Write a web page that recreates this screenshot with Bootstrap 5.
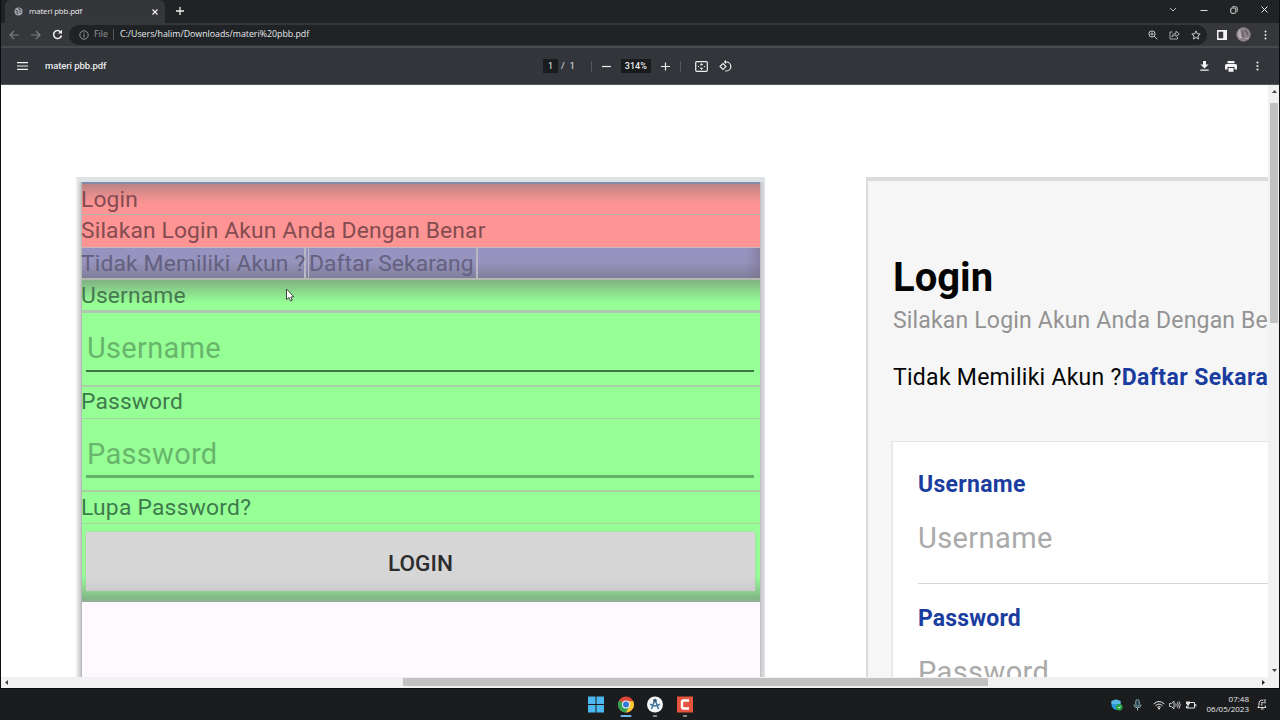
<!DOCTYPE html>
<html lang="id">
<head>
<meta charset="utf-8">
<meta name="viewport" content="width=device-width, initial-scale=1">
<title>materi pbb.pdf</title>
<link rel="stylesheet" href="https://cdn.jsdelivr.net/npm/bootstrap@5.3.0/dist/css/bootstrap.min.css">
<script src="https://cdn.jsdelivr.net/npm/bootstrap@5.3.0/dist/js/bootstrap.bundle.min.js"></script>
<style>
  body { width: 1280px; height: 720px; overflow: hidden; background: #1b1c1e; font-family: "Open Sans", "Liberation Sans", sans-serif; color: #e8eaed; }
  svg { display: block; flex: none; }
  .window { height: 689px; padding: 0 1px; background: #0c0d0e; }
  .tabstrip { height: 23px; background: #202324; }
  .tab-on { width: 160px; height: 23px; margin-left: 4px; padding: 0 7px 0 9px; background: #35363a; border-radius: 6px 6px 0 0; font-size: 8px; }
  .tab-on span { letter-spacing: -.2px; margin-left: 6px; margin-top: -1px; }
  .addressbar { height: 25px; background: #35373a; border-bottom: 2px solid #48494b; padding-left: 8px; }
  .omnibox { width: 1138px; height: 20px; border-radius: 10px; background: #202325; font-size: 8.8px; padding: 0 6px 0 7px; margin-left: 6px; }
  .pdfbar { height: 37px; background: #323539; font-family: Roboto, sans-serif; font-size: 9px; border-bottom: 1px solid #55585a; }
  .pdfbar .side { width: 530px; }
  .numbox { background: #191b1c; height: 14px; line-height: 14px; text-align: center; }
  .sep { width: 1px; height: 11px; background: #55585b; }
  .viewer { height: 592px; background: #fff; font-family: Roboto, sans-serif; }
  .pages { width: 1267px; height: 592px; overflow: hidden; }
  .vscroll { width: 11px; background: #f1f1f1; padding-left: 1px; }
  .vscroll .thumb { width: 8px; height: 220px; background: #c1c1c1; margin: 10px 1px 0; }
  .hscroll { height: 11px; background: #f1f1f1; }
  .hscroll .thumb { width: 585px; height: 8px; background: #c1c1c1; margin-top: -1px; }

  .phone { width: 690px; margin: 92px 0 0 74px; padding: 5px 5px 0 6px; height: 560px;
           background: linear-gradient(90deg, #fff 0, #e4e4e4 3px, #c4c4c4 6px, #bdbdbd 685px, #cbc9cd 686px, #e3e1e4 690px); position: relative; }
  .phone::before { content: ""; position: absolute; left: 2px; right: 0; top: 0; height: 5px; background: #dce2e6; }
  .screen { position: relative; height: 560px; background: #fdf9ff; border-left: 1px solid #b5bbb9; font-size: 22.8px; line-height: 28px; letter-spacing: .16px; color: #3e7a4c; }
  .line-row { height: 32px; border-bottom: 1px solid #b5b5ac; white-space: nowrap; padding-top: 1px; }
  .line-row > span { margin-left: -1px; }
  .r1 { background: linear-gradient(#b98484 0, #d88989 7px, #f69292 17px, #ff9494 22px); color: #834c50; border-top: 2px solid #7f8ba6; height: 33px; padding-top: 2px; }
  .r2 { background: #ff9494; color: #834c50; border-bottom: 0; height: 32px; padding-top: 2px; }
  .r3 { background: linear-gradient(90deg, transparent 664px, #776f8688 679px), linear-gradient(#9693c2 0, #9693bd 14px, #7f7c98 31px); color: #646180; border-top: 1px solid #c2b8bf; border-bottom: 2px solid #b1b8ad; height: 33px; padding-top: 1px; }
  .r3 span { display: inline-block; height: 30px; margin-top: -1px; padding-top: 2px; border-right: 2px solid #b9b7c2; }
  .r3 .first { width: 225px; }
  .r3 .second { width: 170px; margin-left: 2px; border-left: 1px solid #b9b7c2; letter-spacing: .1px; }
  .r4 { background: linear-gradient(#80b183, #8bdb8d 12px, #96ff96 23px); height: 33px; border-bottom: 3px solid #b0c6ae; padding-top: 2px; color: #467850; }
  .g { background: #96ff96; border-color: #a8cfa6; }
  .hint { height: 74px; padding: 18px 6px 0 5px; font-size: 29px; line-height: 34px; letter-spacing: .3px; color: #68b66c; border-bottom: 2px solid #a8cfa6; }
  .hint-last { height: 73px; }
  .hint .rule { height: 2px; background: #3c7643; margin: 5px 0 0 -1px; }
  .hint .rule.soft { height: 3px; background: #63b067; margin-top: 4px; }
  .lupa { padding-top: 2px; letter-spacing: .25px; }
  .btn-wrap { height: 78px; padding: 8px 5px 0 4px; background: linear-gradient(#96ff96 52px, #84b887 74px, #87b68a); border-bottom: 2px solid #93b194; }
  .btn-login { height: 59px; width: 100%; border: 0; border-radius: 0; background: linear-gradient(#d6d6d6 46px, #cbcbce); color: #2c2b2e; font-size: 22.6px; font-weight: 500; padding: 3px 0 0; line-height: 57px; box-shadow: 0 0 3px #a9c8ab; }

  .result { margin: 92px 0 0 101px; width: 402px; height: 560px; background: #f6f6f6; border-left: 2px solid #dadada; border-top: 4px solid #dcdcdc; padding-left: 25px; flex: none; white-space: nowrap; color: #050505; }
  .result h1 { font-size: 40px; line-height: 48px; font-weight: 700; margin: 73px 0 0; }
  .sub { font-size: 23px; line-height: 28px; letter-spacing: .17px; color: #939393; margin-top: 5px; }
  .ask { font-size: 23px; line-height: 28px; letter-spacing: .27px; margin-top: 29px; }
  .ask .blue { letter-spacing: .4px; }
  .blue { color: #1b3da0; font-weight: 700; }
  .form-box { margin: 49px 0 0 -2px; height: 300px; background: #fff; border-left: 2px solid #e8e8e8; border-top: 1px solid #e4e4e4; padding: 29px 0 0 25px; font-size: 23px; line-height: 28px; letter-spacing: .3px; }
  .form-box .blue:not(:first-child) { margin-top: 21px; letter-spacing: .15px; }
  .ph { font-size: 29px; line-height: 34px; letter-spacing: .4px; color: #aaa; margin-top: 22px; }
  .field-line { height: 1px; background: #d6d6d6; margin-top: 28px; }

  .taskbar { height: 31px; padding-left: 587px; background: #1b1c1e; }
  .app { width: 18px; height: 27px; margin-right: 11.7px; }
  .clock { font-size: 8px; line-height: 10px; text-align: right; width: 47px; margin-left: 6px; margin-top: -1px; }
  .cursor { position: absolute; left: 203px; top: 106px; }
</style>
</head>
<body>
<div class="window">
  <!-- tab strip -->
  <div class="tabstrip d-flex align-items-center">
    <div class="tab-on d-flex align-items-center">
      <svg width="9" height="9" viewBox="0 0 9 9"><circle cx="4.500" cy="4.500" r="4" fill="#9fa3a8"/><path d="M1.500 3 3.500 4.200 3 5.500l1 1.500M5 1v1.500l2 .5M5.500 4.500 7 5.500" fill="none" stroke="#3b3d40" stroke-width="1"/></svg>
      <span>materi pbb.pdf</span>
      <svg class="ms-auto" width="6" height="6" viewBox="0 0 6 6"><path d="M.5.5l5 5M5.500.5l-5 5" stroke="#eee" stroke-width="1.200"/></svg>
    </div>
    <svg style="margin-left:11px;margin-top:-1px" width="8" height="8" viewBox="0 0 8 8"><path d="M4 0v8M0 4h8" stroke="#f1f1f1" stroke-width="1.300"/></svg>
    <div class="ms-auto d-flex align-items-center" style="margin-right:11px;margin-top:-4px">
      <svg width="8" height="5" viewBox="0 0 8 5"><path d="M1 1l3 3 3-3" fill="none" stroke="#bbb" /></svg>
      <svg style="margin-left:23px" width="8" height="8" viewBox="0 0 8 8"><path d="M.5 4.500h7" stroke="#ddd"/></svg>
      <svg style="margin-left:22px" width="8" height="8" viewBox="0 0 8 8"><rect x=".8" y="2" width="5" height="5.300" rx="1" fill="none" stroke="#ddd"/><path d="M2.200.7h3.600q1.500 0 1.500 1.500v3.600" fill="none" stroke="#bbb"/></svg>
      <svg style="margin-left:23px" width="7" height="7" viewBox="0 0 7 7"><path d="M.5.5l6 6M6.500.5l-6 6" stroke="#e8e8e8"/></svg>
    </div>
  </div>
  <!-- address bar -->
  <div class="addressbar d-flex align-items-center">
    <svg width="11" height="10" viewBox="0 0 11 10"><path d="M10 5H1.500M5 1 1 5l4 4" fill="none" stroke="#7d8084" stroke-width="1.100"/></svg>
    <svg style="margin-left:10px" width="11" height="10" viewBox="0 0 11 10"><path d="M1 5h8.500M6 1l4 4-4 4" fill="none" stroke="#7d8084" stroke-width="1.100"/></svg>
    <svg style="margin-left:11px" width="11" height="11" viewBox="0 0 11 11"><path d="M8.700 3A4 4 0 1 0 9.500 6.500" fill="none" stroke="#f1f1f1" stroke-width="1.500"/><path d="M6 4.600h4V.7z" fill="#f1f1f1"/></svg>
    <div class="omnibox d-flex align-items-center">
      <svg style="margin-left:3px" width="10" height="10" viewBox="0 0 10 10"><circle cx="5" cy="5" r="4.200" fill="none" stroke="#9a9da1" stroke-width=".9"/><path d="M5 4.300v3.200M5 2.400v1" stroke="#9a9da1" stroke-width="1"/></svg>
      <span style="margin-left:5px;color:#94979b">File</span>
      <div class="sep" style="margin:0 6px 0 5px"></div>
      <span>C:/Users/halim/Downloads/materi%20pbb.pdf</span>
      <div class="ms-auto d-flex align-items-center">
        <svg width="10" height="10" viewBox="0 0 10 10"><circle cx="4" cy="4" r="3.100" fill="none" stroke="#ccc"/><path d="M6.300 6.300 9.300 9.300M2.500 4h3M4 2.500v3" stroke="#ccc"/></svg>
        <svg style="margin-left:11px" width="11" height="10" viewBox="0 0 11 10"><path d="M3.500 2H1v7h7.500V7M3 7c.3-2.500 1.800-3.700 4-3.700V1.200L10.300 4 7 6.600V4.900C5.300 4.900 4 5.600 3 7z" fill="none" stroke="#b8babc" stroke-width=".9"/></svg>
        <svg style="margin-left:11px" width="10" height="10" viewBox="0 0 10 10"><path d="M5 .9l1.200 2.800 3 .3L6.900 6l.7 3L5 7.400 2.400 9l.7-3L.8 4l3-.3z" fill="none" stroke="#ccc"/></svg>
      </div>
    </div>
    <svg style="margin-left:10px" width="10" height="10" viewBox="0 0 10 10"><path d="M0 0h10v10H0zM1.500 1.700v6.600h4.700V1.700z" fill="#f3f3f3" fill-rule="evenodd"/></svg>
    <svg style="margin-left:9px" width="15" height="15" viewBox="0 0 15 15"><circle cx="7.500" cy="7.500" r="7.200" fill="#8b8087"/><path d="M4 2c-3 3-3 7 0 10l2-1-1-4z" fill="#b8adb3"/><path d="M6.500 4l.5 6M9 3c2 2 2.500 3 2.500 5" stroke="#5d535a" stroke-width="1.200" fill="none"/><path d="M9 11.500h4" stroke="#b3a5aa"/></svg>
    <svg style="margin-left:13px" width="3" height="10" viewBox="0 0 3 10"><g fill="#e8e8e8"><circle cx="1.500" cy="1.500" r="1"/><circle cx="1.500" cy="5" r="1"/><circle cx="1.500" cy="8.500" r="1"/></g></svg>
  </div>
  <!-- pdf viewer toolbar -->
  <div class="pdfbar d-flex align-items-center">
    <div class="side d-flex align-items-center" style="padding-left:16px">
      <svg width="11" height="8" viewBox="0 0 11 8"><path d="M0 .7h11M0 4h11M0 7.300h11" stroke="#f1f1f1" stroke-width="1.200"/></svg>
      <span style="margin-left:17px;font-size:9.500px;font-weight:500;letter-spacing:-.08px">materi pbb.pdf</span>
    </div>
    <div class="d-flex align-items-center" style="padding-left:12px">
      <div class="numbox" style="width:15px">1</div><span style="margin-left:3px;line-height:14px">/</span><span style="margin-left:5px;line-height:14px">1</span>
      <div class="sep" style="margin-left:16px"></div>
      <svg style="margin-left:10px" width="9" height="9" viewBox="0 0 9 9"><path d="M0 4.500h9" stroke="#eee" stroke-width="1.200"/></svg>
      <div class="numbox" style="width:30px;margin-left:10px;font-weight:500">314%</div>
      <svg style="margin-left:10px" width="9" height="9" viewBox="0 0 9 9"><path d="M0 4.500h9M4.500 .5v8" stroke="#eee" stroke-width="1.200"/></svg>
      <div class="sep" style="margin-left:10px"></div>
      <svg style="margin-left:14px" width="13" height="11" viewBox="0 0 13 11"><rect x=".7" y=".7" width="11.600" height="9.600" rx="1" fill="none" stroke="#eee" stroke-width="1.200"/><path d="M6.500 2 8.300 4.200H4.700zM6.500 9 4.700 6.800h3.600zM3 5h1v1H3zM9 5h1v1H9z" fill="#eee"/></svg>
      <svg style="margin-left:11px" width="13" height="13" viewBox="0 0 13 13"><path d="M1 6.500 4 3.500l3 3-3 3z" fill="none" stroke="#eee" stroke-width="1.100"/><path d="M6 2h1.300a4.500 4.500 0 0 1 0 9H6.200" fill="none" stroke="#eee" stroke-width="1.200"/><path d="M7 0v4L4.700 2z" fill="#eee"/></svg>
    </div>
    <div class="ms-auto d-flex align-items-center" style="margin-right:20px">
      <svg width="9" height="10" viewBox="0 0 9 10"><path d="M3 0h3v3.500h2.500L4.500 7.500.5 3.500H3zM.3 8.500h8.400v1.300H.3z" fill="#f4f4f4"/></svg>
      <svg style="margin-left:16px" width="12" height="11" viewBox="0 0 12 11"><path d="M2.500 0h7v2.200h-7zM0 4.500Q0 3 1.500 3h9Q12 3 12 4.500v4H9.500V6h-7v2.500H0zM3.500 7h5v3.700h-5z" fill="#f4f4f4"/></svg>
      <svg style="margin-left:19px" width="3" height="10" viewBox="0 0 3 10"><g fill="#e8e8e8"><circle cx="1.500" cy="1.500" r="1.100"/><circle cx="1.500" cy="5" r="1.100"/><circle cx="1.500" cy="8.500" r="1.100"/></g></svg>
    </div>
  </div>
  <!-- document -->
  <div class="viewer d-flex">
    <div class="pages d-flex">
      <div class="phone flex-shrink-0">
        <div class="screen">
          <div class="line-row r1"><span>Login</span></div>
          <div class="line-row r2"><span>Silakan Login Akun Anda Dengan Benar</span></div>
          <div class="line-row r3 d-flex"><span class="first">Tidak Memiliki Akun ?</span><span class="second">Daftar Sekarang</span></div>
          <div class="line-row r4"><span>Username</span></div>
          <div class="hint g">Username<div class="rule"></div></div>
          <div class="line-row g"><span>Password</span></div>
          <div class="hint hint-last g">Password<div class="rule soft"></div></div>
          <div class="line-row lupa g"><span>Lupa Password?</span></div>
          <div class="btn-wrap"><button class="btn btn-login">LOGIN</button></div>
          <svg class="cursor" width="11" height="14" viewBox="0 0 11 14"><path d="M1.500 1v10.500l2.500-2 1.600 3.500 1.700-.8-1.500-3.200 3-.3z" fill="#fff" stroke="#333" stroke-width=".9"/></svg>
        </div>
      </div>
      <div class="result">
        <h1>Login</h1>
        <div class="sub">Silakan Login Akun Anda Dengan Benar</div>
        <div class="ask">Tidak Memiliki Akun ?<span class="blue">Daftar Sekarang</span></div>
        <div class="form-box">
          <div class="blue">Username</div>
          <div class="ph">Username</div>
          <div class="field-line"></div>
          <div class="blue">Password</div>
          <div class="ph">Password</div>
        </div>
      </div>
    </div>
    <div class="vscroll d-flex flex-column align-items-center">
      <svg style="margin-top:5px" width="5" height="3" viewBox="0 0 5 3"><path d="M0 3 2.500 0 5 3z" fill="#444"/></svg>
      <div class="thumb"></div>
      <svg class="mt-auto" style="margin-bottom:5px" width="5" height="3" viewBox="0 0 5 3"><path d="M0 0h5L2.500 3z" fill="#444"/></svg>
    </div>
  </div>
  <div class="hscroll d-flex align-items-center">
    <svg style="margin-left:4px" width="3" height="5" viewBox="0 0 3 5"><path d="M3 0v5L0 2.500z" fill="#444"/></svg>
    <div class="thumb" style="margin-left:395px"></div>
    <svg class="ms-auto" style="margin-right:14px" width="3" height="5" viewBox="0 0 3 5"><path d="M0 0v5l3-2.500z" fill="#222"/></svg>
  </div>
</div>
<!-- taskbar -->
<div class="taskbar d-flex align-items-center">
  <svg class="app" viewBox="0 0 18 27"><path d="M1 5.500h7.500V13H1zM9.500 5.500H17V13H9.500zM1 14h7.500v7.500H1zM9.500 14H17v7.500H9.500z" fill="#4cb8ef"/></svg>
  <svg class="app" viewBox="0 0 18 27"><circle cx="9" cy="13.500" r="8" fill="#dd4637"/><path d="M9 13.500 2.070 9.500A8 8 0 0 0 9 21.500l4-6z" fill="#31a350"/><path d="M9 21.500A8 8 0 0 0 16.300 10.300H9l3.500 5z" fill="#fbc934"/><circle cx="9" cy="13.500" r="4" fill="#f4f4f4"/><circle cx="9" cy="13.500" r="3" fill="#3674d6"/><path d="M4.500 25h9" stroke="#6eb8e8" stroke-width="2" stroke-linecap="round"/></svg>
  <svg class="app" viewBox="0 0 18 27"><circle cx="9" cy="13.500" r="8" fill="#f5f8fa"/><path d="M9 8.500 5.500 18M9 8.500l3.500 9.500M4 13q5 4 10 0" fill="none" stroke="#41739a" stroke-width="1.500"/><circle cx="9" cy="9.500" r="1.800" fill="#355a78"/><path d="M7.500 25h3" stroke="#aaa" stroke-width="1.500" stroke-linecap="round"/></svg>
  <svg class="app" viewBox="0 0 18 27"><path d="M1 5.500h16v16H1z" fill="#e6533f"/><path d="M13 9.500H7.500Q6 9.500 6 11v5q0 1.500 1.500 1.500H13" fill="none" stroke="#fff" stroke-width="2.400"/><path d="M7.500 25h3" stroke="#aaa" stroke-width="1.500" stroke-linecap="round"/></svg>
  <div class="ms-auto d-flex align-items-center" style="margin-right:13px">
    <svg width="12" height="12" viewBox="0 0 12 12"><path d="M5 .5 9.500 2v4q0 3-4.500 5Q.5 9 .5 6V2z" fill="#2b97d8"/><path d="M5 .5 9.500 2v3H.5V2z" fill="#5cb9e6"/><circle cx="8.200" cy="8.200" r="3.300" fill="#25a244"/><path d="M6.700 8.200l1.100 1.100 2-2" stroke="#fff" fill="none" stroke-width=".9"/></svg>
    <svg style="margin-left:10px" width="9" height="12" viewBox="0 0 9 12"><rect x="2.800" y=".7" width="3.400" height="6.600" rx="1.700" fill="#234" stroke="#8fb8bd"/><path d="M1 5.500q0 3.300 3.500 3.300T8 5.500M4.500 9v2.500" fill="none" stroke="#8fb8bd"/></svg>
    <svg style="margin-left:11px" width="12" height="10" viewBox="0 0 12 10"><path d="M.7 4q5.300-5 10.600 0M2.500 5.700q3.500-3.200 7 0M4.200 7.300q1.800-1.500 3.600 0" fill="none" stroke="#e4e4e4" stroke-width="1"/><circle cx="6" cy="8.600" r="1" fill="#eee"/></svg>
    <svg style="margin-left:4px" width="12" height="10" viewBox="0 0 12 10"><path d="M.6 3.500h1.800L5 1.200v7.600L2.400 6.500H.6zM6.700 3.500q1 1.500 0 3M8.300 2.300q2 2.700 0 5.400M9.900 1.200q2.800 3.800 0 7.600" fill="none" stroke="#ddd" stroke-width=".9"/></svg>
    <svg style="margin-left:4px" width="12" height="10" viewBox="0 0 12 10"><path d="M5 2.500h4.500v5.500H1.500V6M10.800 4v2.500" fill="none" stroke="#e4e4e4"/><path d="M1 1.500h4v2L3.500 5.500V8H2.500V5.500L1 3.500z" fill="#e4e4e4"/></svg>
    <div class="clock" style="margin-left:5px;margin-right:1px">07:48<br>06/05/2023</div>
    <svg style="margin-left:7px" width="10" height="11" viewBox="0 0 10 11"><path d="M6 1.200H4.500Q2 1.300 2 4v2.500L.8 8.500h8L8 6.500M4 10h2.500" fill="none" stroke="#ddd" stroke-width="1"/><path d="M6.500 1H9L6.500 3.800H9M4 3.500h1.700L4 6h1.700" fill="none" stroke="#ddd" stroke-width=".8"/></svg>
  </div>
</div>
</body>
</html>
